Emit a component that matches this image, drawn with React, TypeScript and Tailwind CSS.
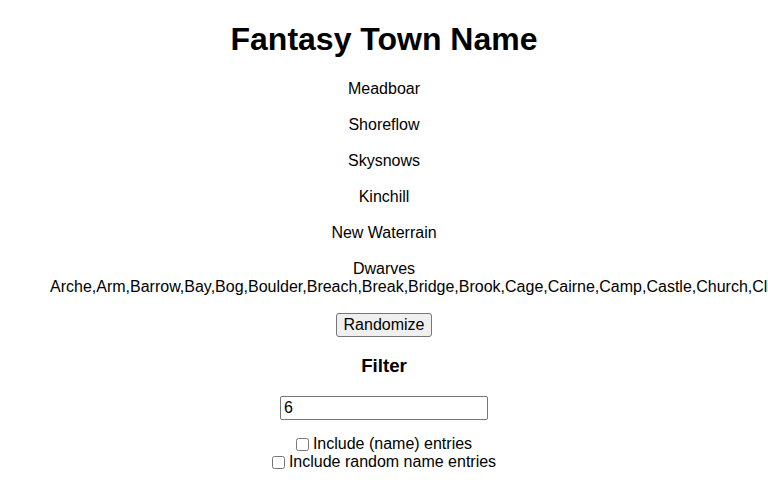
import { useState } from "react";

const NAMES = ["Meadboar", "Shoreflow", "Skysnows", "Kinchill", "New Waterrain"];

const DWARF_PARTS =
  "Arche,Arm,Barrow,Bay,Bog,Boulder,Breach,Break,Bridge,Brook,Cage,Cairne,Camp,Castle,Church,Cliff,Cove,Crag,Creek,Crest,Cross,Dale,Deep,Delve,Den,Drift,Fall,Fell,Ford,Forge,Fort,Gate,Glen,Guard,Hall,Hammer,Haven,Hill,Hold,Hollow";

export default function App() {
  const [filter, setFilter] = useState("6");
  const [withName, setWithName] = useState(false);
  const [withRandom, setWithRandom] = useState(false);

  return (
    <div className="w-full overflow-hidden bg-white text-center text-[16px] leading-[18.4px] text-black font-['Liberation_Sans',Arial,sans-serif]">
      <h1 className="my-[21.44px] text-[32px] font-bold leading-[37px]">
        Fantasy Town Name
      </h1>

      {NAMES.map((name) => (
        <p key={name} className="my-[17.6px]">
          {name}
        </p>
      ))}

      {/* race list overflows to the right, like the original page */}
      <div className="mt-[17.6px]">
        <div>Dwarves</div>
        <div className="whitespace-nowrap pl-[50px] text-left">{DWARF_PARTS}</div>
      </div>

      <div className="mt-4">
        <button className="h-[24px] w-[96px] rounded-[3px] border border-[#767676] bg-[#efefef] px-[6px] text-[16px] leading-[18px] text-black">
          Randomize
        </button>
      </div>

      <h3 className="mt-[18.72px] mb-[18.72px] text-[18.72px] font-bold leading-[21.5px]">
        Filter
      </h3>

      <div>
        <input
          type="text"
          value={filter}
          onChange={(e) => setFilter(e.target.value)}
          className="h-[24px] w-[208px] rounded-[2px] border border-[#767676] px-[3px] text-[16px] text-black"
        />
      </div>

      <div className="mt-4">
        <label className="flex h-[18px] items-center justify-center">
          <input
            type="checkbox"
            checked={withName}
            onChange={(e) => setWithName(e.target.checked)}
            className="mr-[4px] h-[13px] w-[13px]"
          />
          Include (name) entries
        </label>
        <label className="flex h-[17px] items-center justify-center">
          <input
            type="checkbox"
            checked={withRandom}
            onChange={(e) => setWithRandom(e.target.checked)}
            className="mr-[4px] h-[13px] w-[13px]"
          />
          Include random name entries
        </label>
      </div>
    </div>
  );
}
